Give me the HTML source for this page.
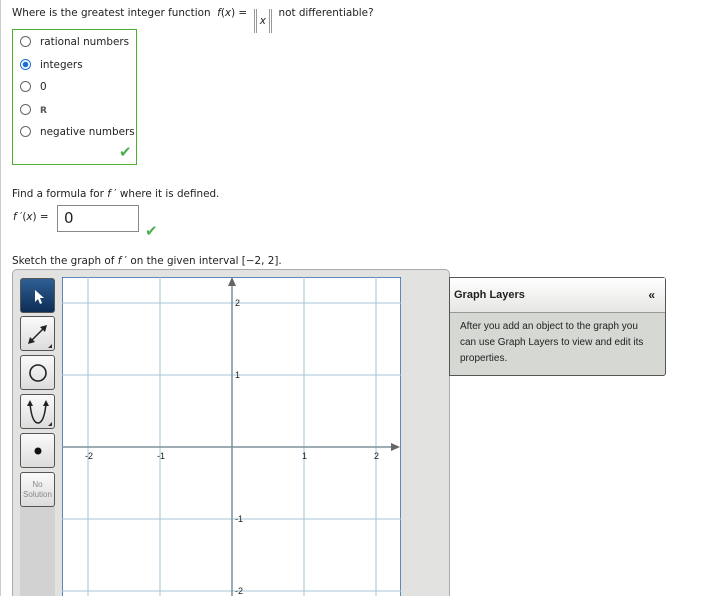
<!DOCTYPE html>
<html style="overflow:hidden;height:596px"><head><style>
body{margin:0;width:717px;height:596px;overflow:hidden;background:#fff;font-family:Verdana,"DejaVu Sans",sans-serif;font-size:10.4px;color:#222;position:relative}
.abs{position:absolute}
.lb{position:absolute;left:0;top:0;width:1px;height:596px;background:#ccc}
.q{left:12px;top:7px;white-space:nowrap}
.box{left:12px;top:29px;width:123px;height:134px;border:1px solid #4caf33}
.opt{position:absolute;left:7px;white-space:nowrap}
.rad{display:inline-block;width:9px;height:9px;border:1px solid #666;border-radius:50%;vertical-align:-2px;margin-right:9px;background:#fff}
.sel{border-color:#1a6fd6;background:radial-gradient(circle,#1a6fd6 2.5px,#fff 3px)}
.btn{position:absolute;left:20px;width:33px;height:33px;border:1px solid #555;border-radius:3px;background:linear-gradient(#fafafa,#dcdcdc)}
.tl{position:absolute;font-size:9px;color:#222;font-family:"Liberation Sans",sans-serif}
.ck{position:absolute;color:#4caf50;font-size:15px;font-weight:bold;font-family:"DejaVu Sans",sans-serif}
</style></head><body>
<div class="lb"></div>
<div class="abs q">Where is the greatest integer function &nbsp;<i>f</i>(<i>x</i>) = &nbsp;<span style="display:inline-block;border-left:3px double #999;border-right:3px double #999;padding:0 3px;height:24px;line-height:24px;vertical-align:-8px"><i>x</i></span>&nbsp; not differentiable?</div>
<div class="abs box">
<div class="opt" style="top:6px"><span class="rad"></span>rational numbers</div>
<div class="opt" style="top:29px"><span class="rad sel"></span>integers</div>
<div class="opt" style="top:51px"><span class="rad"></span>0</div>
<div class="opt" style="top:74px"><span class="rad"></span><b style="font-size:9px;color:#555">R</b></div>
<div class="opt" style="top:96px"><span class="rad"></span>negative numbers</div>
<div class="ck" style="left:106px;top:113px">✔</div>
</div>
<div class="abs" style="left:12px;top:188px">Find a formula for <i>f</i> ′ where it is defined.</div>
<div class="abs" style="left:13px;top:211px"><i>f</i> ′(<i>x</i>) =</div>
<div class="abs" style="left:57px;top:205px;border:1px solid #888;font-size:15px;line-height:25px;padding-left:6px;box-sizing:border-box;width:82px;height:27px">0</div>
<div class="ck" style="left:145px;top:222px">✔</div>
<div class="abs" style="left:12px;top:255px">Sketch the graph of <i>f</i> ′ on the given interval [−2, 2].</div>
<div class="abs" style="left:12px;top:269px;width:436px;height:340px;background:#e2e2e0;border:1px solid #aaa;border-radius:5px"></div>
<div class="abs" style="left:20px;top:506px;width:35px;height:90px;background:#d2d2d2"></div>
<div class="btn" style="top:278px;background:linear-gradient(#2f5f94,#0e2d55)"><svg width="33" height="33"><path d="M14 11 L14 23 L17 20 L19 25 L21 24 L19 19 L23 19 Z" fill="#fff"/></svg></div>
<div class="btn" style="top:316px"><svg width="33" height="33"><path d="M9 25 L24 10" stroke="#222" stroke-width="1.5"/><path d="M7 27 L9 20 L14 25Z M26 8 L24 15 L19 10Z" fill="#222"/><path d="M31 31 L31 27 L27 31Z" fill="#333"/></svg></div>
<div class="btn" style="top:355px"><svg width="33" height="33"><circle cx="17" cy="17" r="8" fill="none" stroke="#222" stroke-width="1.6"/></svg></div>
<div class="btn" style="top:394px"><svg width="33" height="33"><path d="M9 9 Q11 28 17 28 Q23 28 25 9" fill="none" stroke="#222" stroke-width="1.5"/><path d="M6 11 L9 5 L12 11Z M22 11 L25 5 L28 11Z" fill="#222"/><path d="M31 31 L31 27 L27 31Z" fill="#333"/></svg></div>
<div class="btn" style="top:433px"><svg width="33" height="33"><circle cx="17" cy="17" r="3.5" fill="#111"/></svg></div>
<div class="btn" style="top:472px;font-size:8px;color:#888;text-align:center;line-height:10px;font-family:'Liberation Sans',sans-serif"><div style="padding-top:7px">No<br>Solution</div></div>
<svg class="abs" style="left:62px;top:277px" width="339" height="319">
<rect x="0" y="0" width="339" height="330" fill="#fff" stroke="#2a5f9e" stroke-width="1.5"/>
<g stroke="#a3c4d6" stroke-width="1">
<line x1="26" y1="0" x2="26" y2="319"/><line x1="98" y1="0" x2="98" y2="319"/><line x1="242" y1="0" x2="242" y2="319"/><line x1="314" y1="0" x2="314" y2="319"/>
<line x1="0" y1="26" x2="339" y2="26"/><line x1="0" y1="98" x2="339" y2="98"/><line x1="0" y1="242" x2="339" y2="242"/><line x1="0" y1="314" x2="339" y2="314"/>
</g>
<g stroke="#7d8f99" stroke-width="1.5"><line x1="170" y1="6" x2="170" y2="319"/><line x1="0" y1="170" x2="333" y2="170"/></g>
<path d="M166 9 L170 0 L174 9Z M329 166 L338 170 L329 174Z" fill="#666"/>
</svg>
<div class="tl" style="left:85px;top:451px">-2</div><div class="tl" style="left:157px;top:451px">-1</div>
<div class="tl" style="left:302px;top:451px">1</div><div class="tl" style="left:374px;top:451px">2</div>
<div class="tl" style="left:235px;top:298px">2</div><div class="tl" style="left:235px;top:370px">1</div>
<div class="tl" style="left:235px;top:514px">-1</div><div class="tl" style="left:235px;top:586px">-2</div>
<div class="abs" style="left:449px;top:277px;width:215px;height:97px;border:1px solid #555;border-radius:0 3px 3px 0;background:#d6d8d3;font-family:'Liberation Sans',Arial,sans-serif">
<div style="height:34px;border-bottom:1px solid #999;background:linear-gradient(#fff,#e6e6e4);font-weight:bold;font-size:11px;line-height:34px;padding-left:4px;position:relative">Graph Layers<span style="position:absolute;right:10px;font-size:12px">«</span></div>
<div style="padding:6px 10px;font-size:10px;line-height:16px;color:#222">After you add an object to the graph you can use Graph Layers to view and edit its properties.</div>
</div>
</body></html>
